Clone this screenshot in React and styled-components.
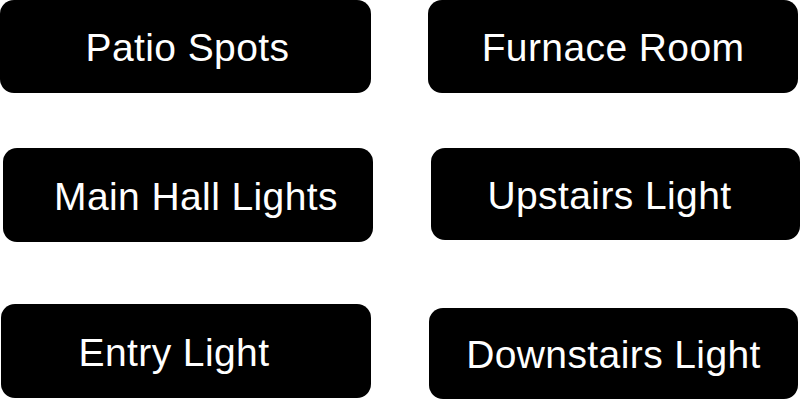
import React from 'react';
import styled, { createGlobalStyle } from 'styled-components';

const GlobalStyle = createGlobalStyle`
    html, body {
        margin: 0;
        padding: 0;
        background: #fff;
    }
`

const Grid = styled.div`
    display: grid;
    grid-template-columns: 372px 372px;
    grid-auto-rows: 93px;
    column-gap: 56px;
    row-gap: 55px;
    width: 801px;
    height: 400px;
`

const Switch = styled.button`
    display: flex;
    align-items: center;
    justify-content: center;
    box-sizing: border-box;
    width: ${p => p.$w || 370}px;
    height: ${p => p.$h || 93}px;
    margin-left: ${p => p.$x || 0}px;
    margin-top: ${p => p.$y || 0}px;
    padding: 3px ${p => Math.max(0, -(p.$nudge || 0) * 2)}px 0 ${p => Math.max(0, (p.$nudge || 0) * 2)}px;
    border: none;
    border-radius: 14px;
    background: #000;
    color: #fff;
    font-family: "Liberation Sans", Arial, sans-serif;
    font-size: 39px;
    letter-spacing: 0.4px;
    white-space: nowrap;
    cursor: pointer;
`

const lights = [
    { name: 'Patio Spots', w: 371, nudge: 2 },
    { name: 'Furnace Room', w: 370 },
    { name: 'Main Hall Lights', x: 3, h: 94, nudge: 8 },
    { name: 'Upstairs Light', x: 3, w: 369, h: 92, nudge: -6 },
    { name: 'Entry Light', x: 1, y: 8, h: 94, nudge: -12 },
    { name: 'Downstairs Light', x: 1, y: 12, w: 369, h: 91 },
]

const App = function () {
    return (
        <>
            <GlobalStyle />
            <Grid>
                {lights.map(l => (
                    <Switch key={l.name} $w={l.w} $h={l.h} $x={l.x} $y={l.y} $nudge={l.nudge}>
                        {l.name}
                    </Switch>
                ))}
            </Grid>
        </>
    )
}

export default App
